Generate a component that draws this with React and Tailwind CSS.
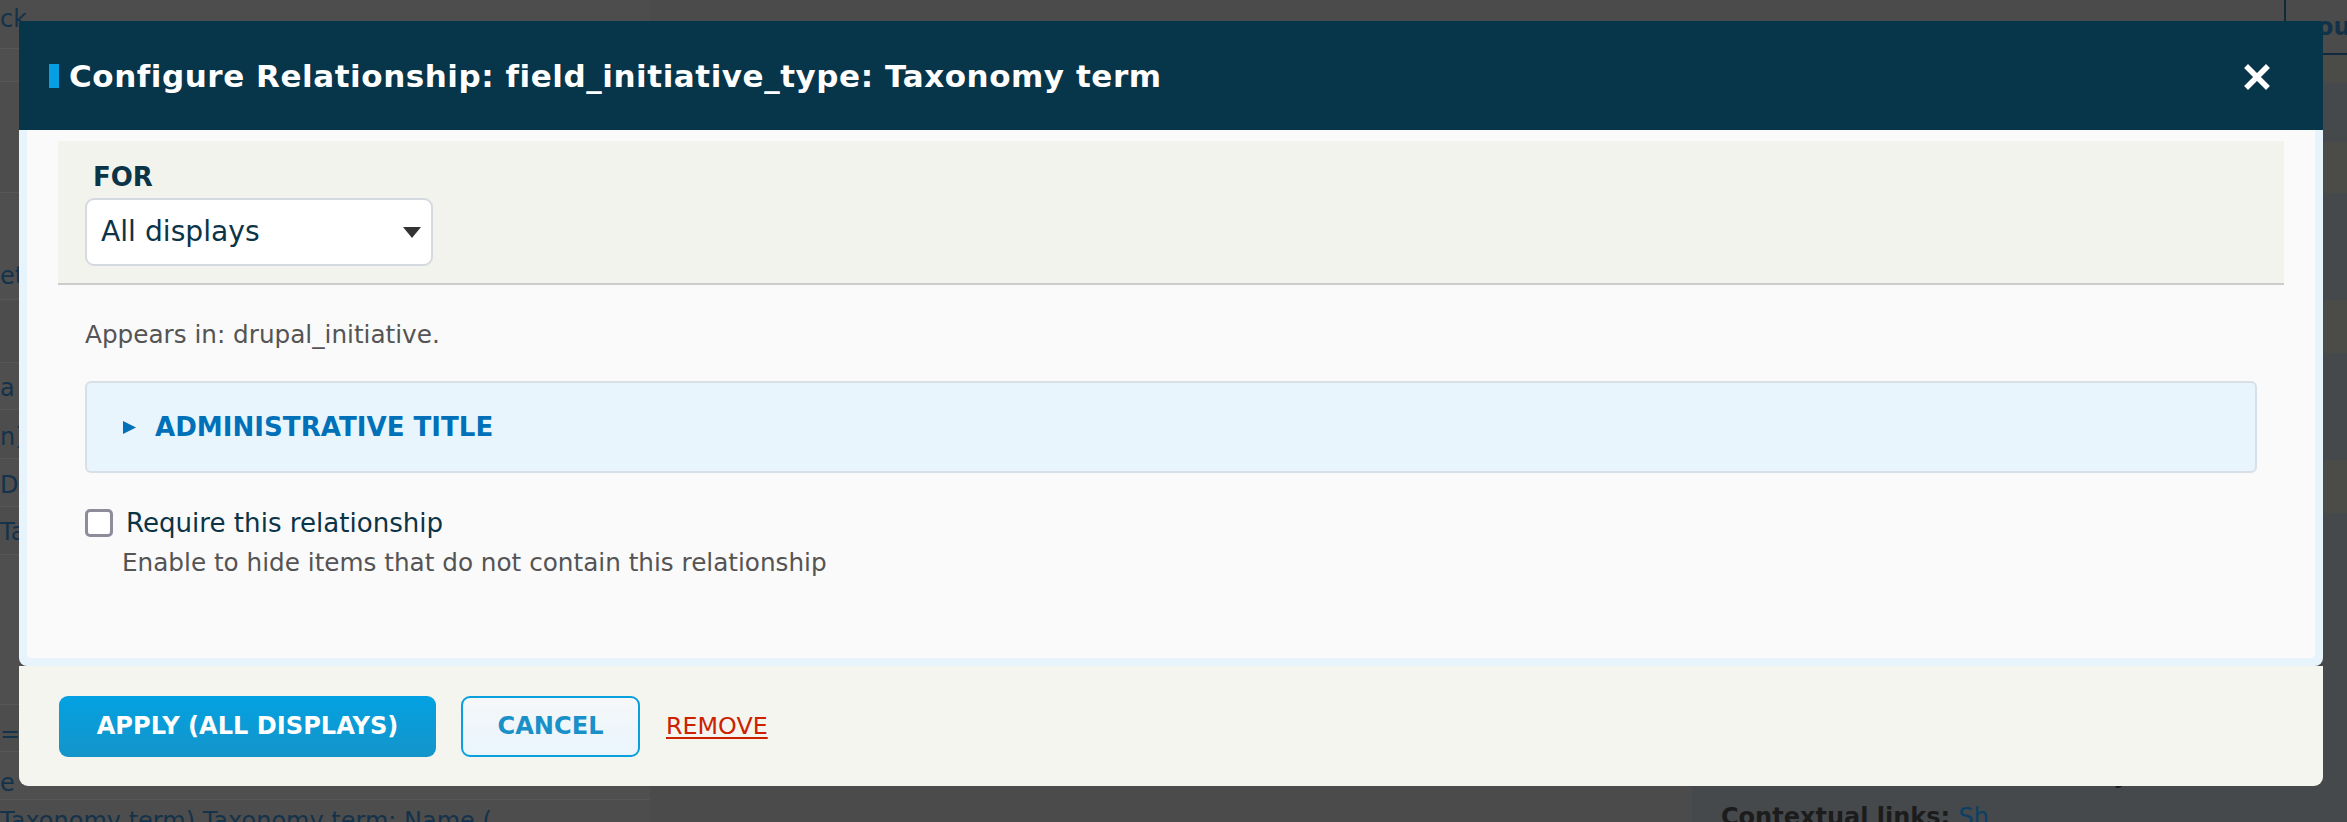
import React from "react";

function BgLeft() {
  const rows = [
    { h: 49, t: "ck", pt: 4 },
    { h: 33, t: "" },
    { h: 111, t: "" },
    { h: 107, t: "et", pt: 68 },
    { h: 63, t: "" },
    { h: 47, t: "a", pt: 10 },
    { h: 49, t: "n]", pt: 12 },
    { h: 48, t: "D [", pt: 11 },
    { h: 48, t: "Ta", pt: 10 },
    { h: 150, t: "" },
    { h: 47, t: "= ", pt: 14 },
    { h: 48, t: "e", pt: 16 },
    { h: 40, t: "Taxonomy term) Taxonomy term: Name (", pt: 6 },
  ];
  return (
    <div className="w-[650px] shrink-0 flex flex-col">
      {rows.map((r, i) => (
        <div
          key={i}
          style={{ height: r.h, paddingTop: r.pt || 0 }}
          className={
            "shrink-0 border-b border-[#575757] text-[24px] leading-[30px] whitespace-nowrap text-[#14324a] " +
            (i % 2 === 0 ? "bg-[#4d4d4d]" : "bg-[#4f4f4f]")
          }
        >
          {r.t}
        </div>
      ))}
    </div>
  );
}

function BgRight() {
  return (
    <div className="flex-1 flex justify-end">
      <div className="w-[655px] flex flex-col">
        <div className="h-[55px] shrink-0 flex justify-end">
          <div className="w-[63px] h-[55px] border-l-2 border-b-2 border-[#0f2a3c] pl-[31px] pt-[12px] text-[24px] font-bold text-[#12324a] leading-[30px] overflow-hidden">
            ou
          </div>
        </div>
        <div className="h-[28px] shrink-0 bg-[#4b4b48]" />
        <div className="h-[59px] shrink-0 bg-[#45494c]" />
        <div className="h-[51px] shrink-0 bg-[#4b4b48]" />
        <div className="h-[107px] shrink-0 bg-[#45494c]" />
        <div className="h-[53px] shrink-0 bg-[#4b4b48]" />
        <div className="h-[107px] shrink-0 bg-[#45494c]" />
        <div className="h-[53px] shrink-0 bg-[#4b4b48]" />
        <div className="flex-1 bg-[#45494c] flex flex-col justify-end pl-[29px]">
          <div className="text-[24px] leading-[30px] whitespace-nowrap text-[#1c1c1c] font-bold">
            Hide attachments in summary: <span className="font-normal text-[#0c3f66]">No</span>
          </div>
          <div className="mt-[12px] h-[20px] text-[24px] leading-[30px] whitespace-nowrap text-[#1c1c1c] font-bold">
            Contextual links: <span className="font-normal text-[#0c3f66]">Sh</span>
          </div>
        </div>
      </div>
    </div>
  );
}

export default function App() {
  return (
    <div className="relative w-[2347px] h-[822px] overflow-hidden bg-[#4b4b4b] font-['DejaVu_Sans',sans-serif]">
      <div className="flex h-full">
        <BgLeft />
        <BgRight />
      </div>

      {/* Dialog */}
      <div className="absolute left-[19px] top-[21px] w-[2304px] h-[765px] flex flex-col">
        {/* Header */}
        <div className="h-[109px] shrink-0 bg-[#073549] rounded-t-[3px] flex items-center pl-[30px] pr-[53px]">
          <div className="w-[10px] h-[24px] bg-[#069fe3]" />
          <h1 className="ml-[10px] text-[31px] tracking-[0.55px] leading-[36px] font-bold text-white whitespace-nowrap">
            Configure Relationship: field_initiative_type: Taxonomy term
          </h1>
          <svg className="ml-auto mt-[3px]" width="26" height="26" viewBox="0 0 26 26">
            <path d="M4 4 L22 22 M22 4 L4 22" stroke="#ffffff" strokeWidth="5.5" strokeLinecap="square" fill="none" />
          </svg>
        </div>

        {/* Content */}
        <div className="h-[536px] shrink-0 bg-[#e8f4fc] px-[8px] pb-[8px] rounded-b-[8px]">
          <div className="h-full bg-[#fafafa] rounded-b-[4px] pt-[11px] px-[31px]">
            <div className="h-[144px] border-b-2 border-[#cccccc] bg-[#f3f3ee] pt-[21px] pl-[27px]">
              <div className="ml-[8px] text-[26px] leading-[31px] font-bold text-[#0c3447]">FOR</div>
              <div className="mt-[5px] w-[348px] h-[68px] border-2 border-[#d5dae0] rounded-[9px] bg-white flex items-center pl-[14px] pr-[10px]">
                <span className="text-[28.2px] text-[#0c3447] leading-[34px]">All displays</span>
                <svg className="ml-auto" width="18" height="11" viewBox="0 0 18 11">
                  <path d="M0 0 L18 0 L9 11 Z" fill="#333333" />
                </svg>
              </div>
            </div>

            <div className="px-[27px]">
              <div className="mt-[35px] text-[24.7px] leading-[30px] text-[#545454]">
                Appears in: drupal_initiative.
              </div>

              <div className="mt-[31px] h-[92px] border-2 border-[#d8e0e6] bg-[#e8f5fd] rounded-[6px] flex items-center pl-[36px]">
                <svg width="13" height="13" viewBox="0 0 13 13">
                  <path d="M0 0 L13 6.5 L0 13 Z" fill="#0071b8" />
                </svg>
                <span className="ml-[19px] text-[26.1px] leading-[32px] font-bold text-[#0071b8]">
                  ADMINISTRATIVE TITLE
                </span>
              </div>

              <div className="mt-[34px] h-[32px] flex items-center">
                <div className="w-[28px] h-[28px] border-[3px] border-[#8e8c9a] rounded-[5px] bg-white" />
                <span className="ml-[13px] text-[26.1px] leading-[32px] text-[#0c3447]">
                  Require this relationship
                </span>
              </div>
              <div className="mt-[9px] pl-[37px] text-[24.7px] leading-[30px] text-[#545454]">
                Enable to hide items that do not contain this relationship
              </div>
            </div>
          </div>
        </div>

        {/* Footer */}
        <div className="h-[120px] shrink-0 bg-[#f5f5f0] rounded-b-[9px] pt-[30px] pl-[40px] flex items-start">
          <button className="w-[377px] h-[61px] rounded-[9px] bg-linear-to-b from-[#02a1e2] to-[#1395c9] text-white font-bold text-[24.1px] flex items-center justify-center">
            APPLY (ALL DISPLAYS)
          </button>
          <button className="ml-[25px] w-[179px] h-[61px] border-2 border-[#0aa0dd] rounded-[9px] bg-linear-to-b from-[#f6f7f8] to-[#e9f5fd] text-[#1a90c8] font-bold text-[24.1px] flex items-center justify-center">
            CANCEL
          </button>
          <div className="ml-[26px] h-[61px] flex items-center">
            <span className="text-[23.8px] text-[#cc2200] underline underline-offset-[3px]">REMOVE</span>
          </div>
        </div>
      </div>
    </div>
  );
}
